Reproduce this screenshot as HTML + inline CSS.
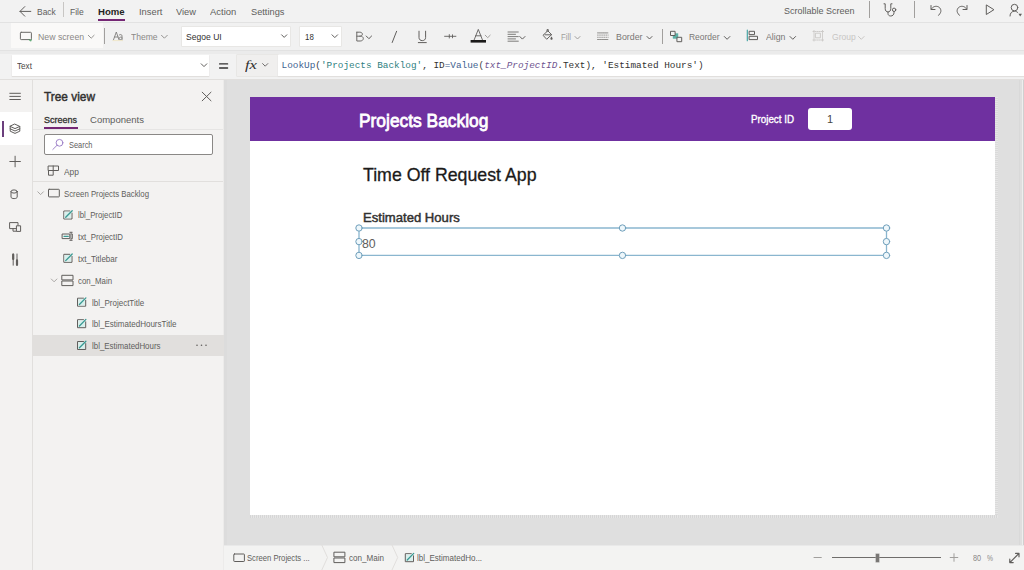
<!DOCTYPE html>
<html><head><meta charset="utf-8">
<style>
html,body{margin:0;padding:0;}
body{width:1024px;height:570px;overflow:hidden;position:relative;background:#f3f2f1;font-family:"Liberation Sans",sans-serif;}
.a{position:absolute;}
.t{position:absolute;white-space:pre;transform-origin:0 0;}
svg{position:absolute;overflow:visible;}
</style></head><body>
<!-- menu bar -->
<div class="a" style="left:0;top:0;width:1024px;height:21.5px;background:#f2f2f2"></div>
<div class="a" style="left:0;top:21.5px;width:1024px;height:1px;background:#e2e2e2"></div>
<div class="a" style="left:63px;top:2px;width:1px;height:15px;background:#c8c6c4"></div>
<div class="a" style="left:98px;top:18.5px;width:27px;height:2px;background:#742774"></div>
<div class="a" style="left:868.5px;top:1px;width:1px;height:16.5px;background:#a19f9d"></div>
<div class="a" style="left:913.5px;top:1px;width:1px;height:16.5px;background:#a19f9d"></div>
<!-- toolbar -->
<div class="a" style="left:0;top:22.5px;width:1024px;height:27.5px;background:#f1f1f1"></div>
<div class="a" style="left:11px;top:23px;width:92px;height:25px;background:#faf9f8"></div>
<div class="a" style="left:103.5px;top:28px;width:1.2px;height:16px;background:#a19f9d"></div>
<div class="a" style="left:182px;top:26.5px;width:108px;height:19.5px;background:#fff;box-shadow:0 0 0 0.6px #e1dfdd"></div>
<div class="a" style="left:300px;top:26.5px;width:41px;height:19.5px;background:#fff;box-shadow:0 0 0 0.6px #e1dfdd"></div>
<div class="a" style="left:662px;top:28.5px;width:1.2px;height:15px;background:#a19f9d"></div>
<div class="a" style="left:0;top:50px;width:1024px;height:1px;background:#e2e2e2"></div><div class="a" style="left:0;top:51px;width:1024px;height:3px;background:#ebebeb"></div>
<!-- formula bar -->
<div class="a" style="left:0;top:54px;width:1024px;height:25px;background:#f2f2f2"></div>
<div class="a" style="left:12px;top:55px;width:197px;height:20.5px;background:#fff;box-shadow:0 0.8px 0 0.3px #e1dfdd"></div>
<div class="a" style="left:236.5px;top:55px;width:41px;height:21px;background:#f0efee;box-shadow:0 0 0 0.6px #e1dfdd"></div>
<div class="a" style="left:278px;top:55px;width:746px;height:20.5px;background:#fff;box-shadow:0 0.8px 0 0.3px #e1dfdd"></div>
<div class="a" style="left:0;top:79px;width:1024px;height:1px;background:#e1dfdd"></div>
<!-- left rail -->
<div class="a" style="left:0;top:80px;width:32px;height:490px;background:#f3f2f1"></div>
<div class="a" style="left:32px;top:80px;width:1px;height:490px;background:#e1dfdd"></div>
<div class="a" style="left:0;top:112px;width:32px;height:33px;background:#fff"></div>
<div class="a" style="left:1.5px;top:121px;width:2.5px;height:16px;background:#6b3f7d"></div>
<!-- tree panel -->
<div class="a" style="left:33px;top:80px;width:191px;height:490px;background:#f3f2f1"></div>
<div class="a" style="left:44px;top:126.5px;width:34px;height:2px;background:#742774"></div>
<div class="a" style="left:33px;top:128.5px;width:191px;height:1px;background:#e6e5e4"></div>
<div class="a" style="left:44px;top:134px;width:167px;height:19px;background:#fff;border:1px solid #8a8886;border-radius:2px"></div>
<div class="a" style="left:33px;top:181px;width:191px;height:1px;background:#e1dfdd"></div>
<div class="a" style="left:222.5px;top:80px;width:1.5px;height:490px;background:#ecebea"></div>
<div class="a" style="left:33px;top:335px;width:191px;height:21px;background:#e1dfdd"></div>
<!-- canvas -->
<div class="a" style="left:224px;top:80px;width:800px;height:465px;background:#dfdfdf"></div>
<div class="a" style="left:224px;top:80px;width:3px;height:465px;background:#dcdcdc"></div>
<div class="a" style="left:1018.5px;top:80px;width:1px;height:465px;background:#d9d9d9"></div>
<div class="a" style="left:1022px;top:80px;width:1px;height:465px;background:#eeeeee"></div>
<div class="a" style="left:1023px;top:80px;width:1px;height:465px;background:#d0d0d0"></div>
<div class="a" style="left:250px;top:515px;width:748px;height:3px;background:repeating-linear-gradient(90deg,#d6d6d6 0 1px,#e6e6e6 1px 2px)"></div>
<div class="a" style="left:995px;top:97px;width:3px;height:418px;background:repeating-linear-gradient(0deg,#dadada 0 1px,#e6e6e6 1px 2px)"></div>
<div class="a" style="left:250px;top:97px;width:745px;height:418px;background:#fff"></div>
<div class="a" style="left:250px;top:97px;width:745px;height:44px;background:#6f30a0"></div>
<div class="a" style="left:808px;top:108px;width:44px;height:22px;background:#fff;border-radius:3px"></div>
<!-- status bar -->
<div class="a" style="left:224px;top:545px;width:800px;height:25px;background:#f3f3f2;border-top:1px solid #e9e9e9;box-sizing:border-box"></div>
<div class="a" style="left:832px;top:557px;width:109px;height:1.2px;background:#6f6d6b"></div>
<div class="a" style="left:875.5px;top:553.5px;width:3px;height:8px;background:#797775;box-shadow:0 0 0 0.5px #a19f9d"></div>


<svg width="1024" height="570" style="left:0;top:0" viewBox="0 0 1024 570" fill="none" stroke-linecap="round" stroke-linejoin="round">
<!-- menu icons -->
<g stroke="#605e5c" stroke-width="1">
 <path d="M20 11.4H30.8M24.8 6.6L20 11.4L24.8 16.2"/>
 <!-- stethoscope -->
 <path d="M884 3.8H885.2V8.4C885.2 10.6 886.3 12 888 12C889.7 12 890.8 10.6 890.8 8.4V3.8H892" />
 <path d="M888 12V13.6C888 15 889.1 16 890.7 16C892.5 16 894 14.8 894 12.8V11.6"/>
 <circle cx="894.1" cy="9.8" r="1.7"/>
 <!-- undo -->
 <path d="M931 5.5V9.5H935"/>
 <path d="M931.3 9.2C932.6 6.6 935.8 5.6 938.3 6.8C940.8 8 941.6 11 940.2 13.2L938.6 15.3"/>
 <!-- redo -->
 <path d="M967 5.5V9.5H963"/>
 <path d="M966.7 9.2C965.4 6.6 962.2 5.6 959.7 6.8C957.2 8 956.4 11 957.8 13.2L959.4 15.3"/>
 <!-- play -->
 <path d="M986.3 5.3V14.5L993.6 9.9Z"/>
 <!-- user -->
 <circle cx="1014.5" cy="7.6" r="3.3"/>
 <path d="M1010 16C1010 13 1012 11.2 1014.5 11.2C1015.8 11.2 1017 11.7 1017.8 12.6"/>
</g>
<path d="M1018.5 13.8L1022 13.8L1020.2 16.4Z" fill="#605e5c"/>
<!-- toolbar icons -->
<g stroke="#6b6967" stroke-width="1">
 <rect x="20.4" y="32.3" width="11" height="7.3" rx="0.8"/>
</g>
<path d="M29.2 39.6L30.6 41.2L31.4 39.6" stroke="#3f9b5b" stroke-width="1"/>
<g stroke="#8a8886" stroke-width="0.9">
 <path d="M88.3 35.3L91.2 38.2L94.1 35.3"/>
 <path d="M161.5 35.3L164.4 38.2L167.3 35.3"/>
</g>
<g stroke="#7a7876" stroke-width="0.85">
 <path d="M113.5 39.8L116.3 32L119 39.8M114.5 37H118"/>
 <path d="M119.2 35C120 34.2 122 34.3 122 35.8V39.8M122 37.4C121 36.8 119.2 37 119.2 38.5C119.2 40 121.2 40 122 38.8"/>
 <path d="M113 40.6H122.5" stroke="#efe3c0" stroke-width="0.8"/>
</g>
<g stroke="#605e5c" stroke-width="1">
 <path d="M281.6 34.8L284.2 37.4L286.8 34.8"/>
 <path d="M332 34.8L334.8 37.6L337.6 34.8"/>
 <path d="M366.2 36L368.9 38.7L371.6 36"/>
 <path d="M485.2 35.2L487.7 37.7L490.2 35.2" stroke="#a19f9d"/>
 <path d="M519.8 36.5L522.4 39.1L525 36.5"/>
 <path d="M575 36.5L577.5 39L580 36.5" stroke="#a19f9d"/>
 <path d="M647 36.5L649.5 39L652 36.5"/>
 <path d="M724.3 36.5L727.1 39.3L729.9 36.5"/>
 <path d="M790 36.5L792.8 39.3L795.6 36.5"/>
 <path d="M858.5 36.5L861.3 39.3L864.1 36.5" stroke="#c8c6c4"/>
</g>
<!-- B I U S A align -->
<g stroke="#6b6967" stroke-width="1">
 <path d="M356.8 32.2V41H360.2C362 41 363.3 40 363.3 38.5C363.3 37 362 36.2 360.2 36.2H356.8M356.8 32.2H359.8C361.3 32.2 362.4 33 362.4 34.2C362.4 35.4 361.3 36.2 359.8 36.2"/>
</g>
<g stroke="#605e5c" stroke-width="1">
 <path d="M396.6 31.3L392.2 42.5"/>
 <path d="M419 31.2V37.5C419 39.6 420.4 40.6 422.3 40.6C424.2 40.6 425.6 39.6 425.6 37.5V31.2M418.3 42.6H426.3"/>
 <path d="M444.6 36.3H455.9M449.3 34.6V38M452.5 34.8V37.8" stroke-width="0.9"/>
 <path d="M474.1 40L478.3 29.4L482.5 40M475.6 35.8H481" stroke-width="0.9"/>
 <path d="M508 32H518.3M508 34.3H515.5M508 36.6H518.3M508 38.9H515.5M508 41.2H518.3" stroke-width="0.8"/>
</g>
<rect x="470.6" y="40" width="15.4" height="2.6" fill="#1b1a19"/>
<!-- fill icon -->
<g stroke="#605e5c" stroke-width="1">
 <path d="M543.3 35L547.8 30.8L551.6 34.6L547 39Z M545 34.8H551.4 M547 31.5V29.6H548.3V31.2" stroke-width="0.95"/>
 <path d="M551.5 36.6C550.6 37.8 550.4 38.4 550.4 38.8C550.4 39.4 550.9 39.8 551.5 39.8C552.1 39.8 552.6 39.4 552.6 38.8C552.6 38.4 552.4 37.8 551.5 36.6Z" fill="#605e5c" stroke="none"/>
</g>
<!-- border icon -->
<path d="M597.5 32.9H608.2M597.5 39.5H608.2" stroke="#797775" stroke-width="0.8" stroke-dasharray="1.6 0.6"/>
<path d="M597.5 35.1H608.2M597.5 37.3H608.2" stroke="#8a8886" stroke-width="0.8" stroke-dasharray="0.8 1.3"/>
<!-- reorder icon -->
<rect x="672.8" y="33.3" width="5.4" height="5.4" fill="#5db0a5"/>
<g stroke="#605e5c" stroke-width="1">
 <rect x="670.9" y="31.3" width="4.2" height="4.2" fill="#f1f1f1"/>
 <rect x="677.3" y="37.3" width="4.4" height="4.4" fill="#f1f1f1"/>
</g>
<!-- align icon -->
<path d="M747.3 30V40.8" stroke="#3aa0a0" stroke-width="1.1"/>
<g stroke="#605e5c" stroke-width="1">
 <rect x="749.5" y="31.3" width="5" height="3.3"/>
 <rect x="749.5" y="36.3" width="8" height="3.3"/>
</g>
<!-- group icon -->
<g stroke="#c8c6c4" stroke-width="0.9">
 <path d="M813 31.5H823.5M813 40H823.5M814 30.5V41M822.5 30.5V41" stroke-dasharray="1 1"/>
 <rect x="815.8" y="33.2" width="4.6" height="4.6"/>
</g>
<!-- formula bar -->
<path d="M201.2 63.8L204 66.6L206.8 63.8" stroke="#605e5c" stroke-width="1"/>
<path d="M219.6 63.9H227.6M219.6 68H227.6" stroke="#323130" stroke-width="1.3"/>
<path d="M262.6 63.6L265.2 66.2L267.8 63.6" stroke="#605e5c" stroke-width="0.9"/>
<!-- rail icons -->
<g stroke="#605e5c" stroke-width="1">
 <path d="M9.8 93.3H20.4M9.8 96.4H20.4M9.8 99.5H20.4"/>
 <path d="M15 124.2L19.8 126.4L15 128.6L10.2 126.4Z"/>
 <path d="M10.2 126.4V131.2L15 133.4L19.8 131.2V126.4M10.2 128.8L15 131L19.8 128.8"/>
 <path d="M15.1 156.2V166.8M9.8 161.5H20.4"/>
 <ellipse cx="14.1" cy="191.5" rx="3.1" ry="1.6"/>
 <path d="M11 191.5V197C11 198 12.4 198.6 14.1 198.6C15.8 198.6 17.2 198 17.2 197V191.5"/>
 <path d="M16.3 228.6H9.6V222.6H18V225.2"/>
 <path d="M13 228.8V231.2H16"/>
 <path d="M16.8 225.8H20.6V231.4H16.8Z"/>
 <path d="M13.2 254V265.2M17 254V265.2"/>
</g>
<path d="M13.2 254.6V259M17 260.4V264.8" stroke="#605e5c" stroke-width="2.2"/>
<!-- tree icons -->
<g stroke="#605e5c" stroke-width="1">
 <path d="M202.2 92.2L211 100.8M211 92.2L202.2 100.8"/>
</g>
<g stroke="#9677c4" stroke-width="0.9">
 <circle cx="59.5" cy="142.8" r="3.4"/>
 <path d="M57.1 145.2L52.8 149.5"/>
</g>
<g stroke="#605e5c" stroke-width="1">
 <path d="M48.5 166H58.5V170.5H48.5ZM48.5 170.5V175.2H53.2V166"/>
 <rect x="48.5" y="189.3" width="10.8" height="7.6" rx="0.6"/>
 <rect x="62.2" y="275.3" width="10.8" height="4.6"/>
 <rect x="62.2" y="281" width="10.8" height="4.6"/>
</g>
<g stroke="#a19f9d" stroke-width="0.9">
 <path d="M37.8 191.8L40.6 194.6L43.4 191.8"/>
 <path d="M51.3 279L54.1 281.8L56.9 279"/>
</g>


<defs>
 <g id="lbl">
  <path d="M6.5 0.5H0.5V8.5H8.7V2.6" stroke="#605e5c" stroke-width="1"/>
  <path d="M1.2 1.2H7.8V7.8H1.2Z" fill="#d8efec" stroke="none"/>
  <path d="M2.4 6.8L8.9 0.2" stroke="#3a9a93" stroke-width="1.3"/>
 </g>
 <g id="txt">
  <rect x="0.5" y="2" width="7.3" height="4.6" stroke="#605e5c" stroke-width="1"/>
  <path d="M2 4.3H6.3" stroke="#3a9a93" stroke-width="1.3"/>
  <path d="M9 0.3V8.3M7.8 0.3H10.2M7.8 8.3H10.2" stroke="#605e5c" stroke-width="0.9"/>
  <path d="M9.5 2H10.5V6.6H9.5" stroke="#605e5c" stroke-width="0.8"/>
 </g>
</defs>
<use href="#lbl" x="63.3" y="210.5"/>
<use href="#txt" x="62" y="232"/>
<use href="#lbl" x="63.3" y="253.8"/>
<use href="#lbl" x="77" y="297.7"/>
<use href="#lbl" x="77" y="319.2"/>
<use href="#lbl" x="77" y="341"/>
<use href="#lbl" x="404.8" y="553.2"/>
<!-- more dots -->
<g fill="#605e5c">
 <circle cx="197" cy="345.2" r="0.8"/><circle cx="201.5" cy="345.2" r="0.8"/><circle cx="206" cy="345.2" r="0.8"/>
</g>
<!-- status bar icons -->
<g stroke="#605e5c" stroke-width="1">
 <rect x="233.8" y="554" width="10.6" height="7.5" rx="0.6"/>
 <rect x="334.3" y="552.2" width="10.6" height="4.6"/>
 <rect x="334.3" y="558" width="10.6" height="4.6"/>
 <path d="M1009.8 562.6L1019 553.4M1009.8 562.6V559.2M1009.8 562.6H1013.2M1019 553.4V556.8M1019 553.4H1015.6" stroke-width="1.2"/>
</g>
<path d="M814 557.5H821.3M950.2 557.5H957.8M954 553.7V561.3" stroke="#a19f9d" stroke-width="1"/>
<path d="M321.8 545L327.5 557.5L321.8 570M392 545L397.7 557.5L392 570" stroke="#e1dfdd" stroke-width="1"/>
<!-- selection -->
<g stroke="#8ab6cf" stroke-width="1.3">
 <path d="M359 228H886.5M359 255.4H886.5M359 228V255.4M886.5 228V255.4"/>
</g>
<g stroke="#6f9fbb" stroke-width="1" fill="#eef7fb">
 <circle cx="359" cy="228" r="3.2"/><circle cx="359" cy="241.6" r="3.2"/><circle cx="359" cy="255.4" r="3.2"/>
 <circle cx="622.5" cy="228" r="3.2"/><circle cx="622.5" cy="255.4" r="3.2"/>
 <circle cx="886.5" cy="228" r="3.2"/><circle cx="886.5" cy="241.6" r="3.2"/><circle cx="886.5" cy="255.4" r="3.2"/>
</g>
<!-- fx -->

</svg>
<div class='t' style='left:36.6px;top:8px;font-size:9.3px;line-height:9.3px;font-weight:400;color:#605e5c;font-family:"Liberation Sans", sans-serif;transform:scaleX(0.9094);'>Back</div>
<div class='t' style='left:70.3px;top:8px;font-size:9.3px;line-height:9.3px;font-weight:400;color:#605e5c;font-family:"Liberation Sans", sans-serif;transform:scaleX(0.9143);'>File</div>
<div class='t' style='left:98.4px;top:8px;font-size:9.3px;line-height:9.3px;font-weight:700;color:#252423;font-family:"Liberation Sans", sans-serif;transform:scaleX(1.0293);'>Home</div>
<div class='t' style='left:138.6px;top:8px;font-size:9.3px;line-height:9.3px;font-weight:400;color:#605e5c;font-family:"Liberation Sans", sans-serif;transform:scaleX(1.0058);'>Insert</div>
<div class='t' style='left:176.0px;top:8px;font-size:9.3px;line-height:9.3px;font-weight:400;color:#605e5c;font-family:"Liberation Sans", sans-serif;transform:scaleX(1.0008);'>View</div>
<div class='t' style='left:210.0px;top:8px;font-size:9.3px;line-height:9.3px;font-weight:400;color:#605e5c;font-family:"Liberation Sans", sans-serif;transform:scaleX(1.0177);'>Action</div>
<div class='t' style='left:250.6px;top:8px;font-size:9.3px;line-height:9.3px;font-weight:400;color:#605e5c;font-family:"Liberation Sans", sans-serif;transform:scaleX(0.9942);'>Settings</div>
<div class='t' style='left:783.7px;top:6px;font-size:9.8px;line-height:9.8px;font-weight:400;color:#605e5c;font-family:"Liberation Sans", sans-serif;transform:scaleX(0.9180);'>Scrollable Screen</div>
<div class='t' style='left:38.3px;top:32px;font-size:9.4px;line-height:9.4px;font-weight:400;color:#8a8886;font-family:"Liberation Sans", sans-serif;transform:scaleX(0.9313);'>New screen</div>
<div class='t' style='left:131.0px;top:32px;font-size:9.4px;line-height:9.4px;font-weight:400;color:#8a8886;font-family:"Liberation Sans", sans-serif;transform:scaleX(0.9113);'>Theme</div>
<div class='t' style='left:185.8px;top:33px;font-size:9.2px;line-height:9.2px;font-weight:400;color:#323130;font-family:"Liberation Sans", sans-serif;transform:scaleX(0.9318);'>Segoe UI</div>
<div class='t' style='left:305.3px;top:33px;font-size:9.2px;line-height:9.2px;font-weight:400;color:#323130;font-family:"Liberation Sans", sans-serif;transform:scaleX(0.8598);'>18</div>
<div class='t' style='left:560.7px;top:32px;font-size:9.4px;line-height:9.4px;font-weight:400;color:#a19f9d;font-family:"Liberation Sans", sans-serif;transform:scaleX(0.8344);'>Fill</div>
<div class='t' style='left:615.5px;top:32px;font-size:9.4px;line-height:9.4px;font-weight:400;color:#797775;font-family:"Liberation Sans", sans-serif;transform:scaleX(0.9417);'>Border</div>
<div class='t' style='left:688.7px;top:32px;font-size:9.4px;line-height:9.4px;font-weight:400;color:#797775;font-family:"Liberation Sans", sans-serif;transform:scaleX(0.9033);'>Reorder</div>
<div class='t' style='left:765.6px;top:32px;font-size:9.4px;line-height:9.4px;font-weight:400;color:#797775;font-family:"Liberation Sans", sans-serif;transform:scaleX(0.9300);'>Align</div>
<div class='t' style='left:831.5px;top:32px;font-size:9.4px;line-height:9.4px;font-weight:400;color:#c8c6c4;font-family:"Liberation Sans", sans-serif;transform:scaleX(0.9094);'>Group</div>
<div class='t' style='left:17.1px;top:62px;font-size:9.2px;line-height:9.2px;font-weight:400;color:#484644;font-family:"Liberation Sans", sans-serif;transform:scaleX(0.8838);'>Text</div>
<div class='t' style='left:281.5px;top:61px;font-size:9.38px;line-height:9.38px;font-weight:400;color:#323130;font-family:"Liberation Mono", monospace;'><span style='color:#41628f'>LookUp</span><span style='color:#444'>(</span><span style='color:#2f7f7f'>'Projects Backlog'</span>, ID<span style='color:#41628f'>=</span><span style='color:#41628f'>Value</span><span style='color:#444'>(</span><i style='color:#6f5590'>txt_ProjectID</i>.Text), 'Estimated Hours')</div>
<div class='t' style='left:44.0px;top:91px;font-size:12.6px;line-height:12.6px;font-weight:400;color:#323130;font-family:"Liberation Sans", sans-serif;transform:scaleX(0.9423);-webkit-text-stroke:0.45px #323130;'>Tree view</div>
<div class='t' style='left:44.0px;top:116px;font-size:9.3px;line-height:9.3px;font-weight:400;color:#323130;font-family:"Liberation Sans", sans-serif;transform:scaleX(0.9675);-webkit-text-stroke:0.3px #323130;'>Screens</div>
<div class='t' style='left:90.0px;top:116px;font-size:9.3px;line-height:9.3px;font-weight:400;color:#605e5c;font-family:"Liberation Sans", sans-serif;transform:scaleX(1.0243);'>Components</div>
<div class='t' style='left:69.0px;top:141px;font-size:9px;line-height:9px;font-weight:400;color:#605e5c;font-family:"Liberation Sans", sans-serif;transform:scaleX(0.8237);'>Search</div>
<div class='t' style='left:64.1px;top:168px;font-size:9px;line-height:9px;font-weight:400;color:#605e5c;font-family:"Liberation Sans", sans-serif;transform:scaleX(0.9303);'>App</div>
<div class='t' style='left:64.1px;top:190px;font-size:9px;line-height:9px;font-weight:400;color:#605e5c;font-family:"Liberation Sans", sans-serif;transform:scaleX(0.8669);'>Screen Projects Backlog</div>
<div class='t' style='left:78.0px;top:211px;font-size:9px;line-height:9px;font-weight:400;color:#605e5c;font-family:"Liberation Sans", sans-serif;transform:scaleX(0.8681);'>lbl_ProjectID</div>
<div class='t' style='left:78.0px;top:233px;font-size:9px;line-height:9px;font-weight:400;color:#605e5c;font-family:"Liberation Sans", sans-serif;transform:scaleX(0.8733);'>txt_ProjectID</div>
<div class='t' style='left:78.0px;top:255px;font-size:9px;line-height:9px;font-weight:400;color:#605e5c;font-family:"Liberation Sans", sans-serif;transform:scaleX(0.8939);'>txt_Titlebar</div>
<div class='t' style='left:78.0px;top:277px;font-size:9px;line-height:9px;font-weight:400;color:#605e5c;font-family:"Liberation Sans", sans-serif;transform:scaleX(0.8711);'>con_Main</div>
<div class='t' style='left:91.5px;top:299px;font-size:9px;line-height:9px;font-weight:400;color:#605e5c;font-family:"Liberation Sans", sans-serif;transform:scaleX(0.8892);'>lbl_ProjectTitle</div>
<div class='t' style='left:91.5px;top:320px;font-size:9px;line-height:9px;font-weight:400;color:#605e5c;font-family:"Liberation Sans", sans-serif;transform:scaleX(0.8912);'>lbl_EstimatedHoursTitle</div>
<div class='t' style='left:91.5px;top:342px;font-size:9px;line-height:9px;font-weight:400;color:#605e5c;font-family:"Liberation Sans", sans-serif;transform:scaleX(0.8777);'>lbl_EstimatedHours</div>
<div class='t' style='left:359.3px;top:111px;font-size:19.2px;line-height:19.2px;font-weight:400;color:#ffffff;font-family:"Liberation Sans", sans-serif;transform:scaleX(0.9055);-webkit-text-stroke:0.8px #fff;'>Projects Backlog</div>
<div class='t' style='left:751.0px;top:114px;font-size:10.5px;line-height:10.5px;font-weight:400;color:#ffffff;font-family:"Liberation Sans", sans-serif;transform:scaleX(0.9326);-webkit-text-stroke:0.35px #fff;'>Project ID</div>
<div class='t' style='left:827.0px;top:114px;font-size:11px;line-height:11px;font-weight:400;color:#484644;font-family:"Liberation Sans", sans-serif;'>1</div>
<div class='t' style='left:362.7px;top:166px;font-size:18.2px;line-height:18.2px;font-weight:400;color:#1b1a19;font-family:"Liberation Sans", sans-serif;transform:scaleX(0.9751);-webkit-text-stroke:0.3px #1b1a19;'>Time Off Request App</div>
<div class='t' style='left:362.5px;top:212px;font-size:12.4px;line-height:12.4px;font-weight:400;color:#323130;font-family:"Liberation Sans", sans-serif;transform:scaleX(1.0568);-webkit-text-stroke:0.45px #323130;'>Estimated Hours</div>
<div class='t' style='left:362.0px;top:237px;font-size:13.2px;line-height:13.2px;font-weight:400;color:#605e5c;font-family:"Liberation Sans", sans-serif;transform:scaleX(0.9338);'>80</div>
<div class='t' style='left:244.5px;top:58px;font-size:13px;line-height:13px;font-weight:400;color:#323130;font-family:"Liberation Serif", serif;transform:scaleX(1.2779);font-style:italic;'>fx</div>
<div class='t' style='left:247.3px;top:554px;font-size:9px;line-height:9px;font-weight:400;color:#605e5c;font-family:"Liberation Sans", sans-serif;transform:scaleX(0.8527);'>Screen Projects ...</div>
<div class='t' style='left:348.5px;top:554px;font-size:9px;line-height:9px;font-weight:400;color:#605e5c;font-family:"Liberation Sans", sans-serif;transform:scaleX(0.8967);'>con_Main</div>
<div class='t' style='left:417.4px;top:554px;font-size:9px;line-height:9px;font-weight:400;color:#605e5c;font-family:"Liberation Sans", sans-serif;transform:scaleX(0.8912);'>lbl_EstimatedHo...</div>
<div class='t' style='left:972.9px;top:554px;font-size:8.5px;line-height:8.5px;font-weight:400;color:#8a8886;font-family:"Liberation Sans", sans-serif;transform:scaleX(0.8554);'>80</div>
<div class='t' style='left:986.6px;top:554px;font-size:8.5px;line-height:8.5px;font-weight:400;color:#8a8886;font-family:"Liberation Sans", sans-serif;transform:scaleX(0.7934);'>%</div>
</body></html>
